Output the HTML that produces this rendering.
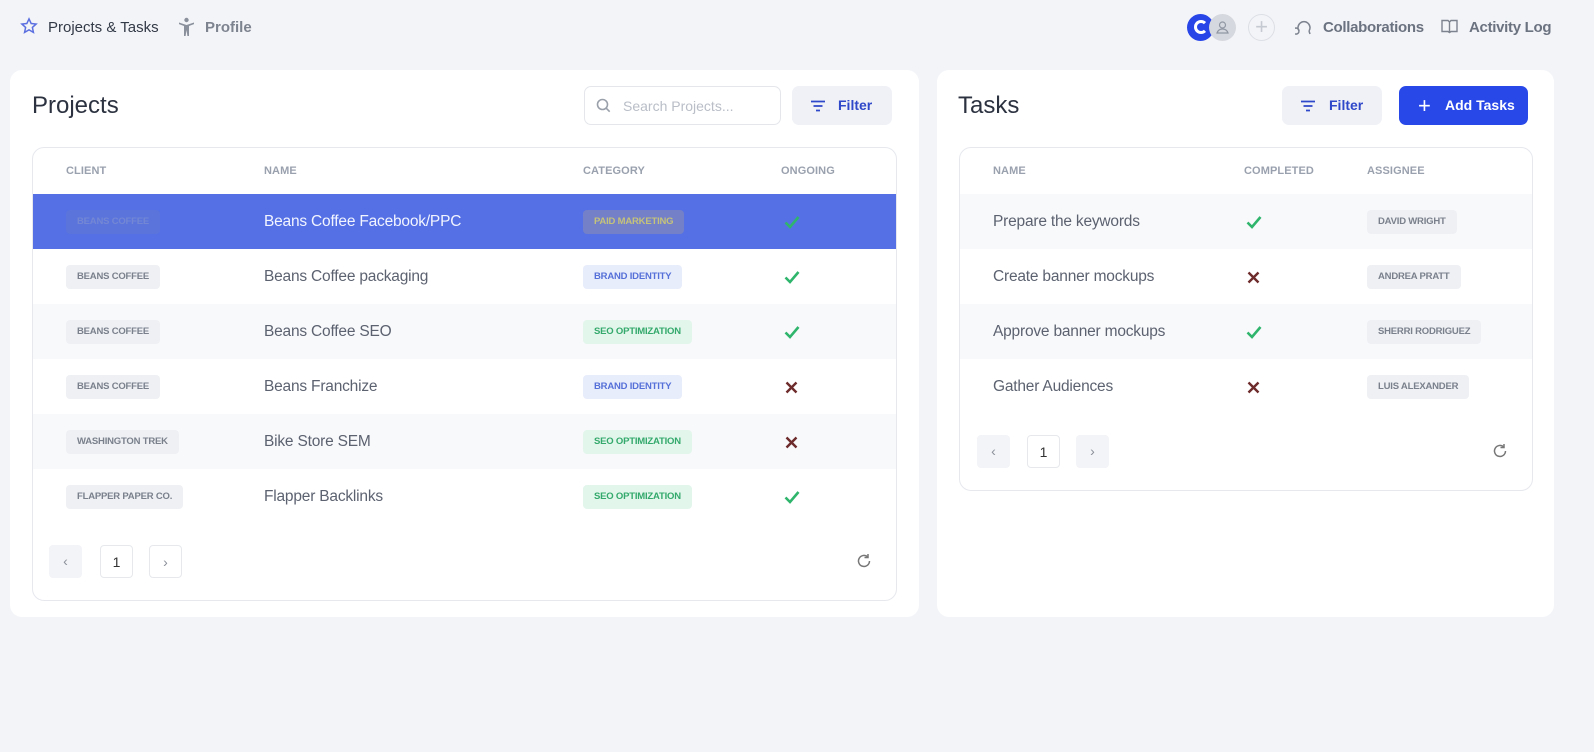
<!DOCTYPE html>
<html><head><meta charset="utf-8"><style>
*{box-sizing:border-box;margin:0;padding:0}
body{width:1594px;height:752px;background:#f3f4f8;font-family:"Liberation Sans",sans-serif;position:relative;overflow:hidden;color:#3f4553}
.a{position:absolute}
.card{position:absolute;background:#fff;border-radius:12px}
.tbl{position:absolute;border:1px solid #e6e8ee;border-radius:12px;background:#fff;overflow:hidden}
.th{position:absolute;top:17px;font-size:11px;font-weight:bold;color:#9aa1ae;letter-spacing:.1px}
.row{position:absolute;left:0;right:0;height:55px}
.alt{background:#f8f9fb}
.badge{position:absolute;top:16px;height:24px;line-height:24px;padding:0 11px;border-radius:4px;font-size:9.5px;font-weight:bold;background:#eef0f3;color:#7a808c;letter-spacing:-.2px}
.bi{background:#e8edfb;color:#5570d8}
.seo{background:#e3f6ec;color:#33a96b}
.nm{position:absolute;top:18px;line-height:20px;font-size:15.5px;color:#5c6270;letter-spacing:-.2px}
.ico{position:absolute;top:21px}
.pg{position:absolute;width:33px;height:33px;border-radius:4px;text-align:center;line-height:33px;font-size:14px;color:#8a8f99}
.btn{position:absolute;height:39px;border-radius:7px;font-size:14px;font-weight:bold;line-height:39px}
</style></head><body>
<div class="a" style="left:20px;top:17px"><svg width="18" height="18" viewBox="0 0 24 24" fill="none" stroke="#5b6fe0" stroke-width="2"><path d="M12 2.5l2.9 6.2 6.6.7-5 4.5 1.4 6.6L12 17.2l-5.9 3.3 1.4-6.6-5-4.5 6.6-.7z"/></svg></div>
<div class="a" style="left:48px;top:19px;font-size:15px;color:#333a47">Projects &amp; Tasks</div>
<div class="a" style="left:178px;top:17px"><svg width="17" height="20" viewBox="0 0 17 20" fill="#8a909c"><circle cx="8.5" cy="3" r="2.2"/><path d="M1 5.5l7.5 2.5 7.5-2.5v1.6L11 9v10H9.4l-.9-6-.9 6H6V9L1 7.1z"/></svg></div>
<div class="a" style="left:205px;top:19px;font-size:15px;font-weight:bold;color:#7d838f">Profile</div>

<div class="a" style="left:1187px;top:14px;width:27px;height:27px;border-radius:50%;background:#2845e8"></div>
<div class="a" style="left:1194px;top:20px;width:14px;height:14px;border-radius:50%;border:3px solid #fff;border-right-color:transparent"></div>
<div class="a" style="left:1209px;top:14px;width:27px;height:27px;border-radius:50%;background:#d5d8de"><svg width="27" height="27" viewBox="0 0 27 27" fill="none" stroke="#9097a3" stroke-width="1.2"><circle cx="13.5" cy="11" r="3"/><path d="M8 19c1-3 3-4 5.5-4s4.5 1 5.5 4z"/></svg></div>
<div class="a" style="left:1248px;top:14px;width:27px;height:27px;border-radius:50%;border:1.5px solid #dcdfe5;color:#c5c9d1;text-align:center;line-height:23px;font-size:22px">+</div>
<div class="a" style="left:1295px;top:18px"><svg width="18" height="18" viewBox="0 0 18 18" fill="none" stroke="#7d838f" stroke-width="1.5"><path d="M4 13a6 6 0 1 1 10 0M14 13l1 3M4 13a3 3 0 1 0 0 .1"/></svg></div>
<div class="a" style="left:1323px;top:19px;font-size:15px;font-weight:bold;color:#6b7280;letter-spacing:-.3px">Collaborations</div>
<div class="a" style="left:1441px;top:19px"><svg width="17" height="15" viewBox="0 0 17 15" fill="none" stroke="#7d838f" stroke-width="1.4"><path d="M1 1.5h6l1.5 1.5L10 1.5h6v11h-6l-1.5 1-1.5-1H1zM8.5 3v10.5"/></svg></div>
<div class="a" style="left:1469px;top:19px;font-size:15px;font-weight:bold;color:#6b7280;letter-spacing:-.3px">Activity Log</div>

<!-- Projects -->
<div class="card" style="left:10px;top:70px;width:909px;height:547px">
<div class="a" style="left:22px;top:22px;font-size:24px;color:#2c3240">Projects</div>
<div class="a" style="left:574px;top:16px;width:197px;height:39px;border:1px solid #e4e6eb;border-radius:7px">
<svg class="a" style="left:11px;top:11px" width="15" height="15" viewBox="0 0 15 15" fill="none" stroke="#9aa0aa" stroke-width="1.6"><circle cx="6.5" cy="6.5" r="5"/><path d="M10.2 10.2l3.5 3.5"/></svg>
<div class="a" style="left:38px;top:11px;font-size:14px;color:#b9bec7">Search Projects...</div></div>
<div class="btn" style="left:782px;top:16px;width:100px;background:#eff1f7;color:#2f47c9"><svg class="a" style="left:18px;top:14px" width="16" height="12" viewBox="0 0 16 12" stroke="#2f47c9" stroke-width="1.8"><path d="M1 1.5h14M3.5 6h9M6 10.5h4"/></svg><span class="a" style="left:46px">Filter</span></div>
<div class="tbl" style="left:22px;top:77px;width:865px;height:454px">
<div class="th" style="left:33px">CLIENT</div><div class="th" style="left:231px">NAME</div><div class="th" style="left:550px">CATEGORY</div><div class="th" style="left:748px">ONGOING</div>
<div class="row" style="top:46px;background:#5470e4"><div class="badge" style="left:33px;background:#5a74dc;color:#7487d4">BEANS COFFEE</div><div class="nm" style="left:231px;color:#f2f4ff">Beans Coffee Facebook/PPC</div><div class="badge" style="left:550px;background:#7480c8;color:#c5c27a">PAID MARKETING</div><svg class="ico" style="left:751px" width="16" height="14" viewBox="0 0 16 14"><path d="M1.5 7.5l4.5 4.5L14.5 2" fill="none" stroke="#2fb56c" stroke-width="2.6"/></svg></div>
<div class="row" style="top:101px"><div class="badge" style="left:33px">BEANS COFFEE</div><div class="nm" style="left:231px">Beans Coffee packaging</div><div class="badge bi" style="left:550px">BRAND IDENTITY</div><svg class="ico" style="left:751px" width="16" height="14" viewBox="0 0 16 14"><path d="M1.5 7.5l4.5 4.5L14.5 2" fill="none" stroke="#2fb56c" stroke-width="2.6"/></svg></div>
<div class="row alt" style="top:156px"><div class="badge" style="left:33px">BEANS COFFEE</div><div class="nm" style="left:231px">Beans Coffee SEO</div><div class="badge seo" style="left:550px">SEO OPTIMIZATION</div><svg class="ico" style="left:751px" width="16" height="14" viewBox="0 0 16 14"><path d="M1.5 7.5l4.5 4.5L14.5 2" fill="none" stroke="#2fb56c" stroke-width="2.6"/></svg></div>
<div class="row" style="top:211px"><div class="badge" style="left:33px">BEANS COFFEE</div><div class="nm" style="left:231px">Beans Franchize</div><div class="badge bi" style="left:550px">BRAND IDENTITY</div><svg class="ico" style="left:752px;top:22px" width="13" height="13" viewBox="0 0 13 13"><path d="M1.5 1.5l10 10M11.5 1.5l-10 10" stroke="#6e2b2b" stroke-width="2.4"/></svg></div>
<div class="row alt" style="top:266px"><div class="badge" style="left:33px">WASHINGTON TREK</div><div class="nm" style="left:231px">Bike Store SEM</div><div class="badge seo" style="left:550px">SEO OPTIMIZATION</div><svg class="ico" style="left:752px;top:22px" width="13" height="13" viewBox="0 0 13 13"><path d="M1.5 1.5l10 10M11.5 1.5l-10 10" stroke="#6e2b2b" stroke-width="2.4"/></svg></div>
<div class="row" style="top:321px"><div class="badge" style="left:33px">FLAPPER PAPER CO.</div><div class="nm" style="left:231px">Flapper Backlinks</div><div class="badge seo" style="left:550px">SEO OPTIMIZATION</div><svg class="ico" style="left:751px" width="16" height="14" viewBox="0 0 16 14"><path d="M1.5 7.5l4.5 4.5L14.5 2" fill="none" stroke="#2fb56c" stroke-width="2.6"/></svg></div>
<div class="pg" style="left:16px;top:397px;background:#f3f4f7">‹</div>
<div class="pg" style="left:67px;top:397px;border:1px solid #e6e8ec;color:#333">1</div>
<div class="pg" style="left:116px;top:397px;border:1px solid #e6e8ec">›</div>
<svg class="a" style="left:823px;top:405px" width="16" height="16" viewBox="0 0 16 16" fill="none" stroke="#777" stroke-width="1.5"><path d="M13.5 8A5.5 5.5 0 1 1 11.5 3.7"/><path d="M12 1v3.5H8.5"/></svg>
</div></div>

<!-- Tasks -->
<div class="card" style="left:937px;top:70px;width:617px;height:547px">
<div class="a" style="left:21px;top:22px;font-size:24px;color:#2c3240">Tasks</div>
<div class="btn" style="left:345px;top:16px;width:100px;background:#eff1f7;color:#2f47c9"><svg class="a" style="left:18px;top:14px" width="16" height="12" viewBox="0 0 16 12" stroke="#2f47c9" stroke-width="1.8"><path d="M1 1.5h14M3.5 6h9M6 10.5h4"/></svg><span class="a" style="left:47px">Filter</span></div>
<div class="btn" style="left:462px;top:16px;width:129px;background:#2848e8;color:#fff"><span class="a" style="left:19px;font-size:22px;font-weight:normal">+</span><span class="a" style="left:46px">Add Tasks</span></div>
<div class="tbl" style="left:22px;top:77px;width:574px;height:344px">
<div class="th" style="left:33px">NAME</div><div class="th" style="left:284px">COMPLETED</div><div class="th" style="left:407px">ASSIGNEE</div>
<div class="row alt" style="top:46px"><div class="nm" style="left:33px">Prepare the keywords</div><svg class="ico" style="left:286px" width="16" height="14" viewBox="0 0 16 14"><path d="M1.5 7.5l4.5 4.5L14.5 2" fill="none" stroke="#2fb56c" stroke-width="2.6"/></svg><div class="badge" style="left:407px">DAVID WRIGHT</div></div>
<div class="row" style="top:101px"><div class="nm" style="left:33px">Create banner mockups</div><svg class="ico" style="left:287px;top:22px" width="13" height="13" viewBox="0 0 13 13"><path d="M1.5 1.5l10 10M11.5 1.5l-10 10" stroke="#6e2b2b" stroke-width="2.4"/></svg><div class="badge" style="left:407px">ANDREA PRATT</div></div>
<div class="row alt" style="top:156px"><div class="nm" style="left:33px">Approve banner mockups</div><svg class="ico" style="left:286px" width="16" height="14" viewBox="0 0 16 14"><path d="M1.5 7.5l4.5 4.5L14.5 2" fill="none" stroke="#2fb56c" stroke-width="2.6"/></svg><div class="badge" style="left:407px">SHERRI RODRIGUEZ</div></div>
<div class="row" style="top:211px"><div class="nm" style="left:33px">Gather Audiences</div><svg class="ico" style="left:287px;top:22px" width="13" height="13" viewBox="0 0 13 13"><path d="M1.5 1.5l10 10M11.5 1.5l-10 10" stroke="#6e2b2b" stroke-width="2.4"/></svg><div class="badge" style="left:407px">LUIS ALEXANDER</div></div>
<div class="pg" style="left:17px;top:287px;background:#f3f4f7">‹</div>
<div class="pg" style="left:67px;top:287px;border:1px solid #e6e8ec;color:#333">1</div>
<div class="pg" style="left:116px;top:287px;background:#f3f4f7">›</div>
<svg class="a" style="left:532px;top:295px" width="16" height="16" viewBox="0 0 16 16" fill="none" stroke="#777" stroke-width="1.5"><path d="M13.5 8A5.5 5.5 0 1 1 11.5 3.7"/><path d="M12 1v3.5H8.5"/></svg>
</div></div>
</body></html>
